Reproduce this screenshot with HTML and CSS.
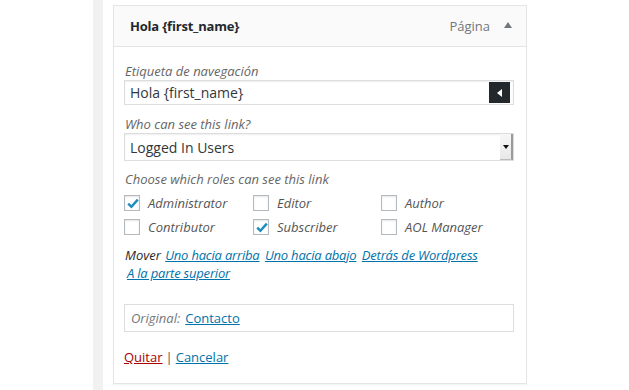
FILE: index.html
```html
<!DOCTYPE html>
<html lang="es">
<head>
<meta charset="utf-8">
<title>Menu item</title>
<link rel="stylesheet" href="styles.css">
</head>
<body>
<div class="page">
  <div class="side"></div>
  <div class="strip"></div>
  <div class="main">
    <div class="item">
      <div class="item-head">
        <span class="item-title">Hola {first_name}</span>
        <span class="item-type">Página</span>
        <span class="item-toggle"></span>
      </div>
      <div class="item-body">
        <div class="label">Etiqueta de navegación</div>
        <div class="field">
          <span class="field-text">Hola {first_name}</span>
          <span class="field-btn"><span class="tri-left"></span></span>
        </div>

        <div class="label gap1">Who can see this link?</div>
        <div class="select">
          <span class="field-text">Logged In Users</span>
          <span class="select-btn"><span class="tri-down"></span></span>
        </div>

        <div class="label gap2">Choose which roles can see this link</div>
        <div class="roles">
          <label class="role"><span class="cb checked"><svg viewBox="0 0 16 16" width="16" height="16"><path d="M3.2 7.6 L6.4 10.8 L12.8 3.6" fill="none" stroke="#1e8cbe" stroke-width="2.4"/></svg></span>Administrator</label>
          <label class="role"><span class="cb"></span>Editor</label>
          <label class="role"><span class="cb"></span>Author</label>
          <label class="role"><span class="cb"></span>Contributor</label>
          <label class="role"><span class="cb checked"><svg viewBox="0 0 16 16" width="16" height="16"><path d="M3.2 7.6 L6.4 10.8 L12.8 3.6" fill="none" stroke="#1e8cbe" stroke-width="2.4"/></svg></span>Subscriber</label>
          <label class="role"><span class="cb"></span>AOL Manager</label>
        </div>

        <div class="move">
          <span class="move-label">Mover</span>
          <a href="#">Uno hacia arriba</a>
          <a href="#">Uno hacia abajo</a>
          <a href="#">Detrás de Wordpress</a>
          <a href="#" class="top-link">A la parte superior</a>
        </div>

        <div class="original">
          <span class="orig-label">Original:</span>
          <a href="#">Contacto</a>
        </div>

        <div class="actions">
          <a href="#" class="delete">Quitar</a><span class="sep">|</span><a href="#">Cancelar</a>
        </div>
      </div>
    </div>
  </div>
</div>
</body>
</html>
```

FILE: styles.css
```css
html, body {
  margin: 0;
  padding: 0;
  background: #fff;
}
body {
  font-family: "Open Sans", "Noto Sans", sans-serif;
  font-size: 13px;
  color: #23282d;
  width: 629px;
  height: 390px;
  overflow: hidden;
}
.page {
  display: flex;
  height: 390px;
}
.side {
  width: 93px;
  background: #fff;
}
.strip {
  width: 10px;
  background: #f1f1f1;
}
.main {
  padding: 5px 0 0 10px;
}
.item {
  width: 412px;
  border: 1px solid #e5e5e5;
  box-shadow: 0 1px 1px rgba(0, 0, 0, 0.04);
  background: #fff;
}
.item-head {
  height: 40px;
  display: flex;
  align-items: center;
  padding: 0 0 0 16px;
  background: #fafafa;
  border-bottom: 1px solid #e5e5e5;
}
.item-title {
  font-weight: 700;
  flex: 1;
  letter-spacing: -0.2px;
}
.item-type {
  color: #72777c;
  margin-right: 14px;
}
.item-toggle {
  width: 0;
  height: 0;
  border-left: 4px solid transparent;
  border-right: 4px solid transparent;
  border-bottom: 6px solid #72777c;
  margin-right: 14px;
  margin-top: -2px;
}
.item-body {
  padding: 15px 12px 17px 10px;
}
.label {
  font-style: italic;
  color: #666;
  line-height: 18px;
  padding-left: 1px;
}
.gap1 { margin-top: 10px; }
.gap2 { margin-top: 9px; }
.field, .select {
  border: 1px solid #ddd;
  box-shadow: inset 0 1px 2px rgba(0, 0, 0, 0.07);
  display: flex;
  align-items: center;
  font-size: 14px;
  color: #32373c;
}
.field { height: 23px; }
.select { height: 26px; }
.field-text {
  flex: 1;
  padding-left: 5px;
}
.field-btn {
  width: 21px;
  height: 21px;
  background: #23282d;
  margin-right: 3px;
  display: flex;
  align-items: center;
  justify-content: center;
}
.tri-left {
  width: 0;
  height: 0;
  border-top: 4px solid transparent;
  border-bottom: 4px solid transparent;
  border-right: 5px solid #fff;
}
.select-btn {
  width: 11px;
  height: 25px;
  background: linear-gradient(#f7f7f7, #e8e8e8);
  border-right: 2px solid #9a9a9a;
  border-bottom: 1px solid #bbb;
  display: flex;
  align-items: center;
  justify-content: center;
  align-self: flex-start;
}
.tri-down {
  width: 0;
  height: 0;
  border-left: 3px solid transparent;
  border-right: 3px solid transparent;
  border-top: 4px solid #111;
}
.roles {
  margin-top: 3px;
  display: grid;
  grid-template-columns: 129px 128px auto;
  grid-auto-rows: 24px;
}
.role {
  display: flex;
  align-items: center;
  gap: 8px;
  font-style: italic;
  color: #555;
}
.cb {
  width: 14px;
  height: 14px;
  border: 1px solid #b4b9be;
  box-shadow: inset 0 1px 2px rgba(0, 0, 0, 0.1);
  background: #fff;
  position: relative;
}
.cb svg {
  position: absolute;
  left: 0;
  top: 0;
}
.move {
  margin-top: 7px;
  line-height: 18px;
  padding-left: 1px;
}
.move-label {
  font-style: italic;
  color: #23282d;
  margin-right: 1px;
}
.move a {
  margin-right: 2px;
  white-space: nowrap;
  letter-spacing: -0.2px;
}
.top-link {
  margin-left: 2px;
}
a {
  color: #0073aa;
  font-style: italic;
  text-decoration: underline;
}
.original {
  margin-top: 22px;
  height: 26px;
  border: 1px solid #ddd;
  display: flex;
  align-items: center;
  padding-left: 6px;
  gap: 5px;
}
.orig-label {
  font-style: italic;
  color: #72777c;
}
.original a {
  font-style: normal;
}
.actions {
  margin-top: 16px;
  line-height: 18px;
}
.actions a {
  font-style: normal;
}
.actions .delete {
  color: #a00;
}
.sep {
  color: #555;
  margin: 0 3px;
}
```
